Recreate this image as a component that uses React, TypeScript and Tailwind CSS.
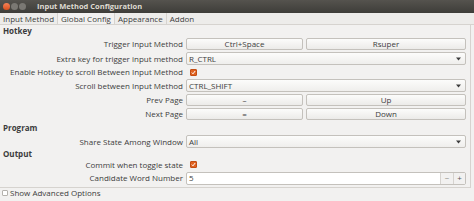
import React from "react";

const font = { fontFamily: '"Open Sans", "Liberation Sans", sans-serif' };

function Btn({ children, w = "flex-1" }: { children: React.ReactNode; w?: string }) {
  return (
    <div className={`${w} h-[12px] flex items-center justify-center rounded-[2px] border border-[#c4c1bc] bg-gradient-to-b from-[#fcfcfb] to-[#ecebe9] text-[#3c3c3c]`}>
      {children}
    </div>
  );
}

function Combo({ value }: { value: string }) {
  return (
    <div className="w-full h-[13px] flex items-center justify-between rounded-[2px] border border-[#c4c1bc] bg-gradient-to-b from-[#fcfcfb] to-[#efeeec] pl-[2px] pr-[4px] text-[#3c3c3c]">
      <span>{value}</span>
      <svg width="5" height="4" viewBox="0 0 5 4">
        <path d="M0 0.5 L5 0.5 L2.5 3.5 Z" fill="#3c3c3c" />
      </svg>
    </div>
  );
}

function Check() {
  return (
    <div className="w-[7px] h-[7px] rounded-[1px] bg-[#e0611f] border border-[#c24d13] flex items-center justify-center">
      <svg width="5" height="5" viewBox="0 0 5 5">
        <path d="M0.8 2.6 L2 3.8 L4.2 1" stroke="#fff" strokeWidth="1" fill="none" />
      </svg>
    </div>
  );
}

function Row({ label, children, h = "h-[14px]" }: { label: string; children: React.ReactNode; h?: string }) {
  return (
    <div className={`flex items-center ${h}`}>
      <div className="w-[186px] shrink-0 text-right pr-[3px] text-[#3c3c3c] whitespace-nowrap">{label}</div>
      <div className="flex-1 flex items-center">{children}</div>
    </div>
  );
}

export default function App() {
  return (
    <div className="w-[474px] h-[201px] bg-[#f2f1f0] text-[8px] leading-none overflow-hidden" style={font}>
      <div className="h-[13px] bg-gradient-to-b from-[#55534e] to-[#3e3d39] flex items-center pl-[3px]">
        <div className="flex items-center gap-[1px]">
          <div className="w-[7px] h-[7px] rounded-full bg-gradient-to-b from-[#f58257] to-[#d94d17]" />
          <div className="w-[7px] h-[7px] rounded-full bg-[#7a7873]" />
          <div className="w-[7px] h-[7px] rounded-full bg-[#7a7873]" />
        </div>
        <div className="ml-[11px] text-[#dfdbd2] font-bold text-[7.5px]">Input Method Configuration</div>
      </div>
      <div className="h-[12px] flex items-end border-b border-[#d6d3cf] bg-[#edecea] text-[#3c3c3c]">
        <div className="h-full flex items-center px-[3px] border-r border-[#d6d3cf]">Input Method</div>
        <div className="h-full flex items-center px-[3px] bg-[#f2f1f0] border-r border-[#d6d3cf]">Global Config</div>
        <div className="h-full flex items-center px-[3px] border-r border-[#d6d3cf]">Appearance</div>
        <div className="h-full flex items-center px-[3px]">Addon</div>
      </div>
      <div className="pr-[4px] border-r border-b border-[#d6d3cf] mr-[3px] pb-[2px]">
        <div className="h-[10px] flex items-end pl-[3px] font-bold text-[#3c3c3c]">Hotkey</div>
        <div className="h-[2px]" />
        <Row label="Trigger Input Method">
          <div className="flex w-full gap-[3px]">
            <Btn>Ctrl+Space</Btn>
            <Btn w="w-[160px]">Rsuper</Btn>
          </div>
        </Row>
        <Row label="Extra key for trigger input method" h="h-[15px]">
          <Combo value="R_CTRL" />
        </Row>
        <Row label="Enable Hotkey to scroll Between Input Method" h="h-[12px]">
          <div className="pl-[4px]">
            <Check />
          </div>
        </Row>
        <Row label="Scroll between Input Method" h="h-[15px]">
          <Combo value="CTRL_SHIFT" />
        </Row>
        <Row label="Prev Page">
          <div className="flex w-full gap-[3px]">
            <Btn>–</Btn>
            <Btn w="w-[160px]">Up</Btn>
          </div>
        </Row>
        <Row label="Next Page">
          <div className="flex w-full gap-[3px]">
            <Btn>=</Btn>
            <Btn w="w-[160px]">Down</Btn>
          </div>
        </Row>
        <div className="h-[11px] flex items-end pl-[3px] font-bold text-[#3c3c3c]">Program</div>
        <div className="h-[2px]" />
        <Row label="Share State Among Window" h="h-[15px]">
          <Combo value="All" />
        </Row>
        <div className="h-[9px] flex items-end pl-[3px] font-bold text-[#3c3c3c]">Output</div>
        <Row label="Commit when toggle state" h="h-[13px]">
          <div className="pl-[4px]">
            <Check />
          </div>
        </Row>
        <Row label="Candidate Word Number" h="h-[14px]">
          <div className="w-full h-[13px] flex items-center rounded-[2px] border border-[#c4c1bc] bg-white text-[#3c3c3c]">
            <span className="flex-1 pl-[2px]">5</span>
            <div className="h-full w-[13px] flex items-center justify-center border-l border-[#d6d3cf] bg-[#f2f1f0] text-[#8a8884]">−</div>
            <div className="h-full w-[12px] flex items-center justify-center border-l border-[#d6d3cf] bg-[#f2f1f0] text-[#5a5854]">+</div>
          </div>
        </Row>
      </div>
      <div className="flex items-center gap-[2px] h-[10px] pl-[2px] text-[#3c3c3c]">
        <div className="w-[6px] h-[6px] border border-[#b5b2ad] bg-white rounded-[1px]" />
        <span>Show Advanced Options</span>
      </div>
    </div>
  );
}
